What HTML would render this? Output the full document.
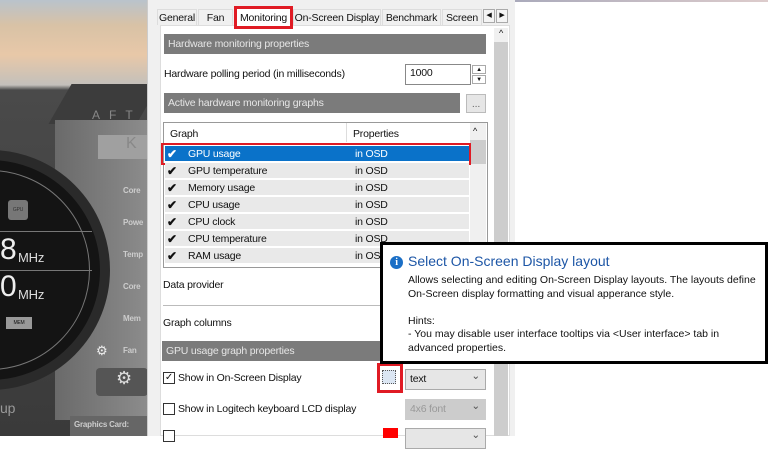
<!DOCTYPE html>
<html><head><style>
*{margin:0;padding:0;box-sizing:border-box}
body{width:768px;height:436px;overflow:hidden;position:relative;background:#fff;font-family:"Liberation Sans",sans-serif;font-size:10.5px;letter-spacing:-0.2px;color:#111}
.a{position:absolute}
.bar{position:absolute;background:#7b7b7b;color:#e6e6e6;font-size:10.5px;padding-left:4px;line-height:20px}
.row{position:absolute;left:165px;width:304px;height:16px;background:#e9e9e9;border-bottom:1px solid #fff;line-height:16px}
.row span{position:absolute}
.chk{position:absolute;left:2px;top:0;font-size:12px;font-weight:bold}
.cb{position:absolute;width:12px;height:12px;border:1px solid #333;background:#fff}
.dd{position:absolute;border:1px solid #aaa;background:#e6e6e6;padding-left:4px;line-height:19px}
.dd:after{content:"⌄";position:absolute;right:5px;top:-3px;color:#555}
.tab{position:absolute;top:0;height:16px;border:1px solid #ddd;border-bottom:0;white-space:nowrap;overflow:hidden;text-align:center}
</style></head><body>
<div class="a" style="left:0;top:0;width:148px;height:436px;background:linear-gradient(180deg,#b9c3cc 0,#d8c2a6 25px,#e8c8a8 55px,#c3c0bb 85px,#4a4a4a 90px,#3a3a3a 436px)"></div>
<div class="a" style="left:60px;top:84px;width:88px;height:40px;background:#3c3c3c;transform:skewX(-30deg)"></div>
<div class="a" style="left:92px;top:108px;color:#888;font-size:12px;letter-spacing:9px">AFT</div>
<div class="a" style="left:55px;top:120px;width:93px;height:300px;background:linear-gradient(90deg,#6a6a6a,#8c8c8c)"></div>
<div class="a" style="left:98px;top:135px;width:50px;height:24px;background:#a0a0a0;color:#888;font-size:16px;padding-left:28px">K</div>
<div class="a" style="left:-130px;top:150px;width:240px;height:240px;border-radius:50%;background:#141414;border:10px solid #2a2a2a"></div>
<div class="a" style="left:-110px;top:170px;width:200px;height:200px;border-radius:50%;border:1px solid #777"></div>
<div class="a" style="left:0;top:231px;width:92px;height:40px;border-top:1px solid #777;border-bottom:1px solid #777"></div>
<div class="a" style="left:0;top:233px;color:#eee;font-size:30px">8</div>
<div class="a" style="left:18px;top:250px;color:#ddd;font-size:13px">MHz</div>
<div class="a" style="left:0;top:270px;color:#eee;font-size:30px">0</div>
<div class="a" style="left:18px;top:287px;color:#ddd;font-size:13px">MHz</div>
<div class="a" style="left:8px;top:200px;width:20px;height:20px;background:#777;border-radius:3px;font-size:5px;color:#333;text-align:center;line-height:20px">GPU</div>
<div class="a" style="left:6px;top:317px;width:26px;height:12px;background:#999;font-size:5px;text-align:center;line-height:12px">MEM</div>
<div class="a" style="left:123px;top:175px;color:#ccc;font-size:8px;font-weight:bold;line-height:32px">Core<br>Powe<br>Temp<br>Core<br>Mem<br>Fan</div>
<div class="a" style="left:96px;top:368px;width:52px;height:28px;background:#555;border-radius:4px;color:#ddd;font-size:18px;padding-left:20px">⚙</div>
<div class="a" style="left:96px;top:343px;color:#eee;font-size:13px">⚙</div>
<div class="a" style="left:0;top:400px;color:#999;font-size:14px">up</div>
<div class="a" style="left:70px;top:416px;width:78px;height:20px;background:#666;color:#ccc;font-size:8px;font-weight:bold;padding:4px 4px">Graphics Card:</div>
<div class="a" style="left:147px;top:0;width:368px;height:436px;background:#f0f0f0;border-left:1px solid #ccc"></div>
<div class="a" style="left:515px;top:0;width:253px;height:2px;background:linear-gradient(90deg,#aab,#dcc)"></div>
<div class="a" style="left:157px;top:9px;height:16px;width:326px;line-height:16px">
<span class="tab" style="left:0;width:40px">General</span>
<span class="tab" style="left:41px;width:35px">Fan</span>
<span class="tab" style="left:136px;width:88px">On-Screen Display</span>
<span class="tab" style="left:225px;width:59px">Benchmark</span>
<span class="tab" style="left:285px;width:40px;text-align:left;padding-left:3px">Screen c</span>
</div>
<div class="a" style="left:483px;top:9px;width:12px;height:14px;border:1px solid #aaa;background:#f4f4f4;font-size:7px;text-align:center;line-height:12px">◀</div>
<div class="a" style="left:496px;top:9px;width:12px;height:14px;border:1px solid #aaa;background:#f4f4f4;font-size:7px;text-align:center;line-height:12px">▶</div>
<div class="a" style="left:160px;top:25px;width:350px;height:411px;background:#fff;border:1px solid #ddd"></div>
<div class="a" style="left:234px;top:6px;width:59px;height:23px;background:#fff;line-height:18px;text-align:center;border:3px solid #e01b24">Monitoring</div>
<div class="a" style="left:494px;top:30px;width:14px;height:406px;background:#cdcdcd"></div>
<div class="a" style="left:494px;top:28px;width:14px;height:14px;background:#f0f0f0;font-size:9px;text-align:center">^</div>
<div class="bar" style="left:164px;top:34px;width:322px;height:20px">Hardware monitoring properties</div>
<div class="a" style="left:164px;top:68px">Hardware polling period (in milliseconds)</div>
<div class="a" style="left:405px;top:64px;width:66px;height:21px;border:1px solid #888;background:#fff;padding:2px 4px">1000</div>
<div class="a" style="left:472px;top:65px;width:14px;height:9px;border:1px solid #aaa;font-size:6px;text-align:center;line-height:8px">▲</div>
<div class="a" style="left:472px;top:75px;width:14px;height:9px;border:1px solid #aaa;font-size:6px;text-align:center;line-height:8px">▼</div>
<div class="bar" style="left:164px;top:93px;width:296px;height:20px">Active hardware monitoring graphs</div>
<div class="a" style="left:466px;top:94px;width:20px;height:19px;border:1px solid #bbb;background:#e6e6e6;text-align:center;color:#666;line-height:18px">...</div>
<div class="a" style="left:163px;top:122px;width:325px;height:146px;border:1px solid #999;background:#fff"></div>
<div class="a" style="left:470px;top:123px;width:16px;height:144px;background:#f0f0f0"></div>
<div class="a" style="left:470px;top:140px;width:16px;height:24px;background:#cdcdcd"></div>
<div class="a" style="left:473px;top:126px;font-size:9px">^</div>
<div class="a" style="left:170px;top:128px">Graph</div>
<div class="a" style="left:346px;top:123px;width:1px;height:19px;background:#ddd"></div>
<div class="a" style="left:353px;top:128px">Properties</div>
<div class="row" style="top:146px;background:#0a72c9;color:#fff"><span class="chk">✔</span><span style="left:23px">GPU usage</span><span style="left:190px">in OSD</span></div>
<div class="a" style="left:161px;top:143px;width:310px;height:22px;border:2px solid #e01b24"></div>
<div class="row" style="top:163px"><span class="chk">✔</span><span style="left:23px">GPU temperature</span><span style="left:190px">in OSD</span></div>
<div class="row" style="top:180px"><span class="chk">✔</span><span style="left:23px">Memory usage</span><span style="left:190px">in OSD</span></div>
<div class="row" style="top:197px"><span class="chk">✔</span><span style="left:23px">CPU usage</span><span style="left:190px">in OSD</span></div>
<div class="row" style="top:214px"><span class="chk">✔</span><span style="left:23px">CPU clock</span><span style="left:190px">in OSD</span></div>
<div class="row" style="top:231px"><span class="chk">✔</span><span style="left:23px">CPU temperature</span><span style="left:190px">in OSD</span></div>
<div class="row" style="top:248px"><span class="chk">✔</span><span style="left:23px">RAM usage</span><span style="left:190px">in OSD</span></div>
<div class="a" style="left:163px;top:279px">Data provider</div>
<div class="a" style="left:163px;top:305px;width:322px;height:1px;background:#bbb"></div>
<div class="a" style="left:163px;top:317px">Graph columns</div>
<div class="bar" style="left:162px;top:341px;width:324px;height:20px">GPU usage graph properties</div>
<div class="cb" style="left:163px;top:372px;font-size:10px;line-height:10px;text-align:center">✓</div>
<div class="a" style="left:178px;top:372px">Show in On-Screen Display</div>
<div class="a" style="left:377px;top:363px;width:26px;height:30px;border:3px solid #e01b24;background:#fff"></div>
<div class="a" style="left:382px;top:370px;width:14px;height:14px;border:1px dotted #555;background:#dbe6f3"></div>
<div class="dd" style="left:405px;top:369px;width:81px;height:21px">text</div>
<div class="cb" style="left:163px;top:403px"></div>
<div class="a" style="left:178px;top:403px">Show in Logitech keyboard LCD display</div>
<div class="dd" style="left:405px;top:399px;width:81px;height:21px;color:#999;background:#ccc;border-color:#ccc">4x6 font</div>
<div class="cb" style="left:163px;top:430px"></div>
<div class="a" style="left:383px;top:428px;width:15px;height:10px;background:#f00"></div>
<div class="dd" style="left:405px;top:428px;width:81px;height:21px"></div>
<div class="a" style="left:380px;top:242px;width:388px;height:122px;background:#fff;border:3px solid #000"></div>
<div class="a" style="left:390px;top:256px;width:13px;height:13px;border-radius:50%;background:#1b6fc6;color:#fff;font-size:10px;font-weight:bold;text-align:center;line-height:13px;font-family:'Liberation Serif',serif">i</div>
<div class="a" style="left:408px;top:253px;font-size:14px;letter-spacing:0;color:#1d56a6">Select On-Screen Display layout</div>
<div class="a" style="left:408px;top:274px;font-size:10.5px;letter-spacing:0;line-height:13.5px;width:360px;white-space:nowrap">Allows selecting and editing On-Screen Display layouts. The layouts define<br>On-Screen display formatting and visual apperance style.<br><br>Hints:<br>- You may disable user interface tooltips via &lt;User interface&gt; tab in<br>advanced properties.</div>
</body></html>
